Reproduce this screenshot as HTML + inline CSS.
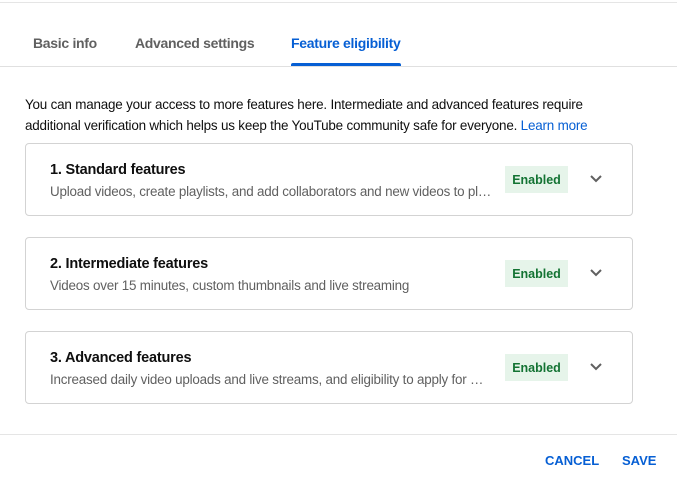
<!DOCTYPE html>
<html><head><style>
*{margin:0;padding:0;box-sizing:border-box}
body{width:677px;height:485px;background:#fff;font-family:"Liberation Sans",Arial,sans-serif;position:relative;overflow:hidden;color:#0f0f0f}
.top{position:absolute;left:0;right:0;top:2px;height:1px;background:#e5e5e5}
.tabline{position:absolute;left:0;right:0;top:66px;height:1px;background:#e0e0e0}
.tab{position:absolute;top:35px;font-size:14px;color:#606060;font-weight:bold;letter-spacing:-0.3px}
.act{color:#065fd4}
.ul{position:absolute;left:291px;top:63px;width:110px;height:3px;background:#065fd4;border-radius:2px 2px 0 0}
.intro{position:absolute;left:25px;top:94px;font-size:13.45px;line-height:21px;color:#0f0f0f;width:570px;letter-spacing:-0.2px}
.intro a{color:#065fd4;text-decoration:none}
.card{position:absolute;left:25px;width:608px;height:73px;border:1px solid #d3d3d3;border-radius:4px}
.card h3{position:absolute;left:24px;top:18px;font-size:14.5px;font-weight:bold;color:#0f0f0f;letter-spacing:-0.2px}
.card p{position:absolute;left:24px;top:40px;font-size:13.4px;color:#606060;width:444px;white-space:nowrap;overflow:hidden;text-overflow:ellipsis;letter-spacing:-0.2px}
.badge{position:absolute;left:479px;top:22px;width:63px;height:27px;background:#e6f4ea;color:#137333;font-size:12.5px;font-weight:bold;text-align:center;line-height:28px}
.chev{position:absolute;left:563px;top:30px}
.foot{position:absolute;left:0;right:0;top:434px;height:1px;background:#e5e5e5}
.btn{position:absolute;top:453px;font-size:13px;font-weight:bold;color:#065fd4}
</style></head><body>
<div class="top"></div>
<div class="tab" style="left:33px">Basic info</div>
<div class="tab" style="left:135px">Advanced settings</div>
<div class="tab act" style="left:291px">Feature eligibility</div>
<div class="ul"></div>
<div class="tabline"></div>
<div class="intro">You can manage your access to more features here. Intermediate and advanced features require additional verification which helps us keep the YouTube community safe for everyone. <a>Learn more</a></div>

<div class="card" style="top:143px"><h3>1. Standard features</h3><p>Upload videos, create playlists, and add collaborators and new videos to playlists</p><div class="badge">Enabled</div><svg class="chev" width="14" height="10" viewBox="0 0 14 10"><path d="M2 2l5 5 5-5" stroke="#606060" stroke-width="2" fill="none"/></svg></div>
<div class="card" style="top:237px"><h3>2. Intermediate features</h3><p>Videos over 15 minutes, custom thumbnails and live streaming</p><div class="badge">Enabled</div><svg class="chev" width="14" height="10" viewBox="0 0 14 10"><path d="M2 2l5 5 5-5" stroke="#606060" stroke-width="2" fill="none"/></svg></div>
<div class="card" style="top:331px"><h3>3. Advanced features</h3><p>Increased daily video uploads and live streams, and eligibility to apply for monetization</p><div class="badge">Enabled</div><svg class="chev" width="14" height="10" viewBox="0 0 14 10"><path d="M2 2l5 5 5-5" stroke="#606060" stroke-width="2" fill="none"/></svg></div>

<div class="foot"></div>
<div class="btn" style="left:545px">CANCEL</div>
<div class="btn" style="left:622px">SAVE</div>
</body></html>
